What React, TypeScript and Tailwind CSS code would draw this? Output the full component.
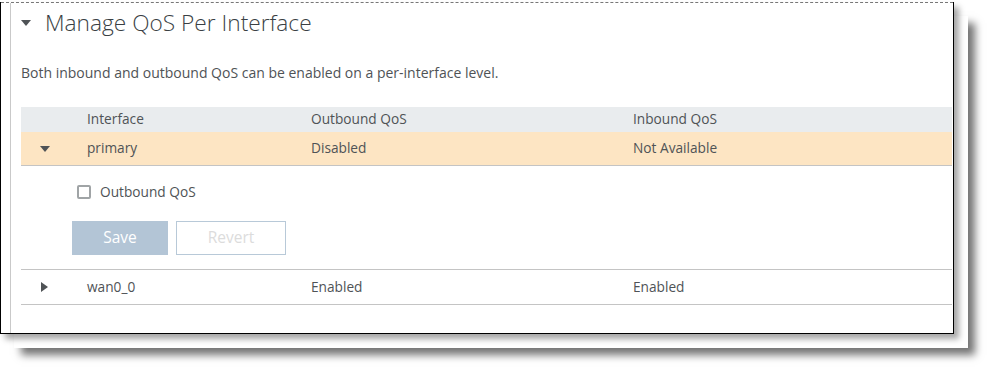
import React from "react";

const font = { fontFamily: '"Open Sans", "Noto Sans", sans-serif' };

function TriDown({ className = "" }: { className?: string }) {
  return (
    <svg width="10" height="6" viewBox="0 0 10 6" className={className}>
      <path d="M0 0 L10 0 L5 6 Z" fill="#4f5356" />
    </svg>
  );
}

function TriRight({ className = "" }: { className?: string }) {
  return (
    <svg width="7" height="10" viewBox="0 0 7 10" className={className}>
      <path d="M0 0 L7 5 L0 10 Z" fill="#4f5356" />
    </svg>
  );
}

export default function App() {
  return (
    <div className="w-[991px] h-[370px] bg-white overflow-hidden" style={font}>
      <div className="mt-[2px] w-[954px] h-[332px] bg-white border-l border-r border-b border-black shadow-[5px_5px_6px_rgba(0,0,0,0.35),14px_14px_0_0_#ffffff,21px_21px_8px_rgba(0,0,0,0.55)] flex flex-col">
        <div className="h-0 border-t border-dashed border-[#777]" />
        <div className="flex-1 ml-[9px] border-l border-[#c9c9c9] pl-[10px] pr-[1px] text-[#4f5356]">
          {/* Title */}
          <div className="flex items-center h-[30px] mt-[5px]">
            <TriDown />
            <span className="ml-[14px] text-[22.7px] leading-[30px] font-light text-[#3a3f44]">
              Manage QoS Per Interface
            </span>
          </div>
          {/* Description */}
          <div className="mt-[25px] text-[14px] leading-[20px]">
            Both inbound and outbound QoS can be enabled on a per-interface level.
          </div>
          {/* Table */}
          <div className="mt-[24px] text-[13.7px]">
            <div className="grid grid-cols-[66px_224px_322px_1fr] h-[25px] items-center bg-[#e9ecee]">
              <div />
              <div>Interface</div>
              <div>Outbound QoS</div>
              <div>Inbound QoS</div>
            </div>
            <div className="grid grid-cols-[66px_224px_322px_1fr] h-[34px] items-center bg-[#fde5c3] border-b border-[#c4c4c4]">
              <div className="pl-[19px] flex items-center">
                <TriDown />
              </div>
              <div>primary</div>
              <div>Disabled</div>
              <div>Not Available</div>
            </div>
            <div className="h-[104px] border-b border-[#c4c4c4] pt-[19px]">
              <label className="flex items-center ml-[56px] h-[14px]">
                <span className="w-[14px] h-[14px] border-2 border-[#a0a4a6] rounded-[2px] bg-white" />
                <span className="ml-[9px]">Outbound QoS</span>
              </label>
              <div className="flex ml-[51px] mt-[22px] gap-[8px]">
                <button className="w-[96px] h-[34px] bg-[#b3c5d6] text-white text-[15.5px]">
                  Save
                </button>
                <button className="w-[110px] h-[34px] border border-[#b8c9d8] text-[#dcdcdc] text-[15.5px] bg-white">
                  Revert
                </button>
              </div>
            </div>
            <div className="grid grid-cols-[66px_224px_322px_1fr] h-[35px] items-center border-b border-[#c4c4c4]">
              <div className="pl-[20px] flex items-center">
                <TriRight />
              </div>
              <div>wan0_0</div>
              <div>Enabled</div>
              <div>Enabled</div>
            </div>
          </div>
        </div>
      </div>
    </div>
  );
}
